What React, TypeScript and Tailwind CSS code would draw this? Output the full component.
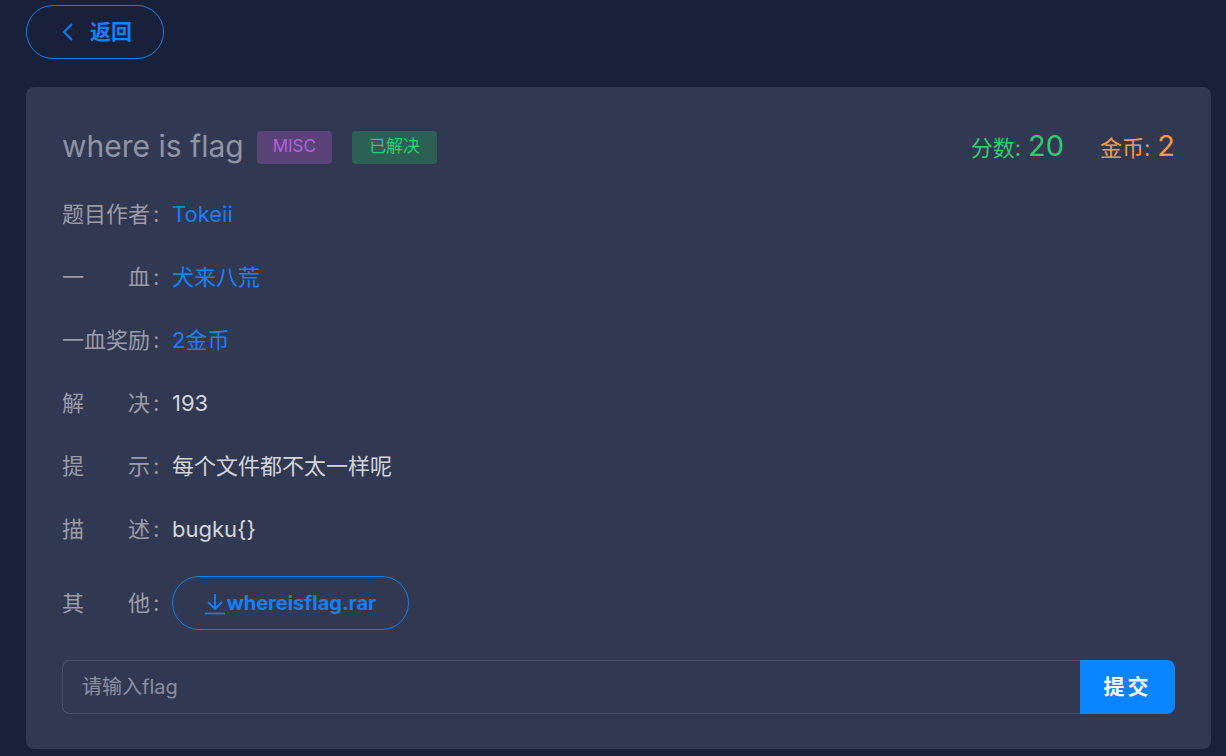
const font = "font-['Inter','Noto_Sans_CJK_SC',sans-serif]";

function Label({ chars }: { chars: string[] }) {
  return (
    <div className="flex w-[110px] shrink-0 items-center text-[#9c9ca6]">
      <span className="flex w-[88px] justify-between">
        {chars.map((c, i) => (
          <span key={i}>{c}</span>
        ))}
      </span>
      <span className="ml-[3px]">:</span>
    </div>
  );
}

function Row({ chars, children }: { chars: string[]; children: React.ReactNode }) {
  return (
    <div className="flex h-[63px] items-center text-[22px]">
      <Label chars={chars} />
      {children}
    </div>
  );
}

export default function App() {
  return (
    <div className={`min-h-[756px] w-full bg-[#19203a] pl-[26px] pr-[15px] pt-[5px] ${font}`}>
      {/* back button */}
      <button className="flex h-[54px] w-[138px] items-center rounded-full border border-[#0a7ef5] pl-[34px] text-[#1380ff]">
        <svg width="14" height="20" viewBox="0 0 14 20" fill="none" stroke="currentColor" strokeWidth="1.8">
          <path d="M11 2 L3 10 L11 18" />
        </svg>
        <span className="ml-[15px] text-[21px] font-bold">返回</span>
      </button>

      {/* card */}
      <div className="mt-[28px] rounded-[8px] bg-[#313852] px-[36px] pb-[35px] pt-[39px]">
        <div className="flex h-[40px] items-center justify-between">
          <div className="flex items-center">
            <span className="text-[30px] text-[#8f94a5]">where is flag</span>
            <span className="ml-[13px] mt-[2px] flex h-[33px] items-center rounded-[4px] bg-[#5a4378] px-[16px] text-[17px] text-[#b660dc]">
              MISC
            </span>
            <span className="ml-[20px] mt-[2px] flex h-[33px] items-center rounded-[4px] bg-[#2c6054] px-[17px] text-[17px] text-[#2fcb6e]">
              已解决
            </span>
          </div>
          <div className="flex items-baseline">
            <span className="text-[22px] text-[#2ecc71]">分数:</span>
            <span className="ml-[7px] text-[29px] text-[#2ecc71]">20</span>
            <span className="ml-[36px] text-[22px] text-[#ff9a45]">金币:</span>
            <span className="ml-[7px] text-[29px] text-[#ff9a45]">2</span>
          </div>
        </div>

        <div className="mt-[17px]">
          <Row chars={["题", "目", "作", "者"]}>
            <span className="text-[#1680ff]">Tokeii</span>
          </Row>
          <Row chars={["一", "血"]}>
            <span className="text-[#1680ff]">犬来八荒</span>
          </Row>
          <Row chars={["一", "血", "奖", "励"]}>
            <span className="text-[#1680ff]">2金币</span>
          </Row>
          <Row chars={["解", "决"]}>
            <span className="text-[#d4d5dc]">193</span>
          </Row>
          <Row chars={["提", "示"]}>
            <span className="text-[#d4d5dc]">每个文件都不太一样呢</span>
          </Row>
          <Row chars={["描", "述"]}>
            <span className="text-[#d4d5dc]">bugku{"{}"}</span>
          </Row>
        </div>

        <div className="mt-[15px] flex h-[54px] items-center text-[22px]">
          <Label chars={["其", "他"]} />
          <button className="flex h-[54px] w-[237px] items-center justify-center rounded-full border border-[#0a7ef5] text-[#1380ff]">
            <svg width="20" height="24" viewBox="0 0 20 24" fill="none" stroke="currentColor" strokeWidth="1.8">
              <path d="M10 3 V18 M3 11 L10 18 L17 11" />
              <path d="M0 22.5 H20" />
            </svg>
            <span className="ml-[2px] text-[20px] font-bold">whereisflag.rar</span>
          </button>
        </div>

        <div className="mt-[30px] flex h-[54px]">
          <div className="flex flex-1 items-center rounded-l-[8px] border border-r-0 border-[#4a5069] pl-[19px] text-[20px] text-[#8b90a2]">
            请输入flag
          </div>
          <button className="w-[95px] rounded-r-[8px] bg-[#0a84ff] text-[21px] font-bold tracking-[3px] text-white">
            提交
          </button>
        </div>
      </div>
    </div>
  );
}
